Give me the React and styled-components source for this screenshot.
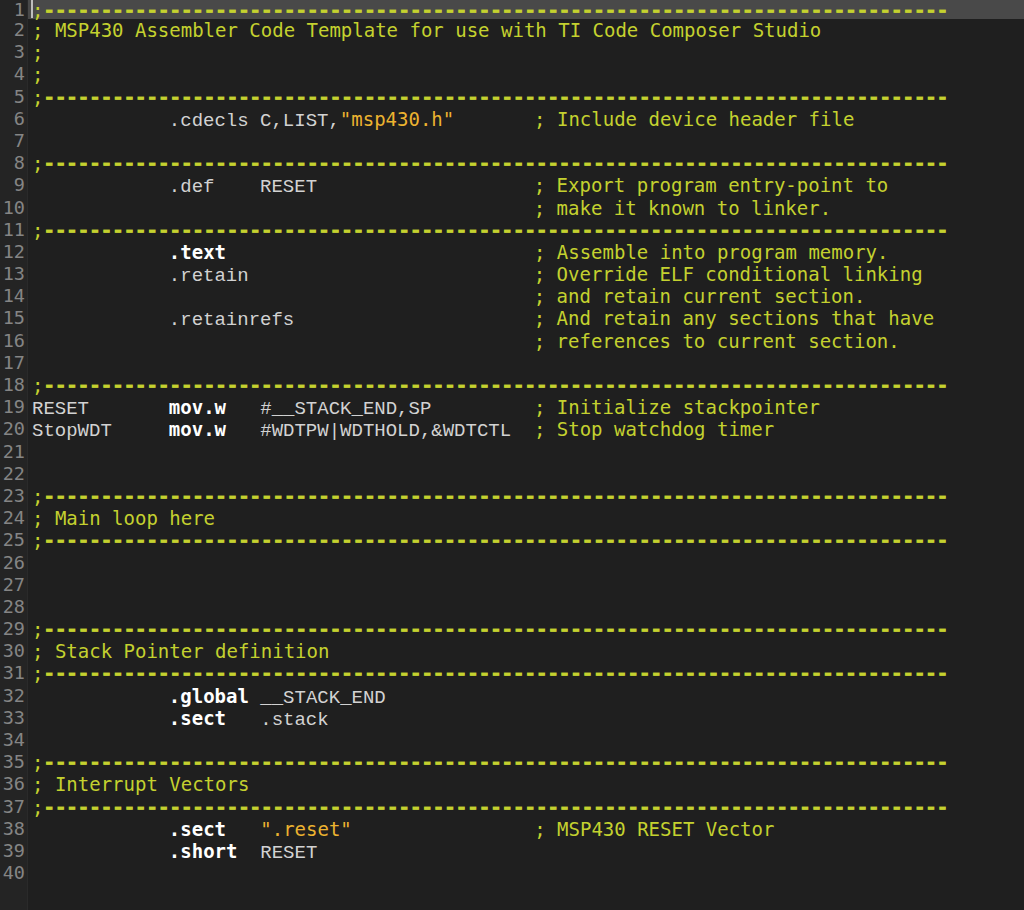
import React from "react";
import styled, { createGlobalStyle, css } from "styled-components";

const Global = createGlobalStyle`
  html, body { margin: 0; padding: 0; background: #1f1f1f; }
  body { font-family: "DejaVu Sans Mono", monospace; }
`;

const LINE_H = 22.2;
const COMMENT = "#c4d12f";

const Editor = styled.div`
  display: flex;
  height: 910px;
  overflow: hidden;
  background: #1f1f1f;
`;

const Gutter = styled.div`
  width: 27px;
  flex: 0 0 27px;
  background: #242424;
  border-right: 1px solid #2a2a2a;
  display: flex;
  flex-direction: column;
`;

const rowBox = css`
  height: ${LINE_H}px;
  line-height: ${LINE_H}px;
  &:first-child {
    height: 19px;
    line-height: 20px;
  }
`;

const LineNo = styled.div`
  ${rowBox}
  text-align: right;
  padding-right: 2px;
  font-family: "DejaVu Sans Mono", monospace;
  font-size: 18.5px;
  color: #858585;
`;

const Code = styled.div`
  flex: 1;
  display: flex;
  flex-direction: column;
`;

const Line = styled.div`
  ${rowBox}
  position: relative;
  padding-left: 4px;
  white-space: pre;
  font-size: 19px;
  ${(p) =>
    p.$active &&
    css`
      background: #494949;
    `}
`;

const Cursor = styled.span`
  position: absolute;
  left: 3px;
  top: 0;
  width: 2px;
  height: 18px;
  background: #bdbdbd;
`;

const Seg = styled.span`
  font-family: ${(p) =>
    p.$kind === "t" || p.$kind === "sp"
      ? '"Liberation Mono", monospace'
      : '"DejaVu Sans Mono", monospace'};
  font-weight: ${(p) => (p.$kind === "b" ? 700 : 400)};
  color: ${(p) =>
    ({
      c: COMMENT,
      s: "#ecb330",
      t: "#d2d2d2",
      b: "#ffffff",
      sp: "#d2d2d2",
    })[p.$kind]};
`;

const DashChar = styled.span`
  -webkit-text-stroke: 1.7px ${COMMENT};
`;

const DASH = "DASH";
const d = [[0, "c", DASH]];
const c = (t) => [[0, "c", t]];

const LINES = [
  d,
  c("; MSP430 Assembler Code Template for use with TI Code Composer Studio"),
  c(";"),
  c(";"),
  d,
  [
    [12, "t", ".cdecls C,LIST,"],
    [27, "s", '"msp430.h"'],
    [44, "c", "; Include device header file"],
  ],
  [],
  d,
  [
    [12, "t", ".def"],
    [20, "t", "RESET"],
    [44, "c", "; Export program entry-point to"],
  ],
  [[44, "c", "; make it known to linker."]],
  d,
  [
    [12, "b", ".text"],
    [44, "c", "; Assemble into program memory."],
  ],
  [
    [12, "t", ".retain"],
    [44, "c", "; Override ELF conditional linking"],
  ],
  [[44, "c", "; and retain current section."]],
  [
    [12, "t", ".retainrefs"],
    [44, "c", "; And retain any sections that have"],
  ],
  [[44, "c", "; references to current section."]],
  [],
  d,
  [
    [0, "t", "RESET"],
    [12, "b", "mov.w"],
    [20, "t", "#__STACK_END,SP"],
    [44, "c", "; Initialize stackpointer"],
  ],
  [
    [0, "t", "StopWDT"],
    [12, "b", "mov.w"],
    [20, "t", "#WDTPW|WDTHOLD,&WDTCTL"],
    [44, "c", "; Stop watchdog timer"],
  ],
  [],
  [],
  d,
  c("; Main loop here"),
  d,
  [],
  [],
  [],
  d,
  c("; Stack Pointer definition"),
  d,
  [
    [12, "b", ".global"],
    [20, "t", "__STACK_END"],
  ],
  [
    [12, "b", ".sect"],
    [20, "t", ".stack"],
  ],
  [],
  d,
  c("; Interrupt Vectors"),
  d,
  [
    [12, "b", ".sect"],
    [20, "s", '".reset"'],
    [44, "c", "; MSP430 RESET Vector"],
  ],
  [
    [12, "b", ".short"],
    [20, "t", "RESET"],
  ],
  [],
];

function Rule() {
  return (
    <Seg $kind="c">
      ;
      {Array.from({ length: 79 }, (_, i) => (
        <DashChar key={i}>-</DashChar>
      ))}
    </Seg>
  );
}

function renderLine(segs) {
  if (segs[0] && segs[0][2] === DASH) return <Rule />;
  const out = [];
  let col = 0;
  segs.forEach(([at, kind, text], i) => {
    if (at > col) {
      out.push(
        <Seg key={"p" + i} $kind="sp">
          {" ".repeat(at - col)}
        </Seg>
      );
      col = at;
    }
    out.push(
      <Seg key={"s" + i} $kind={kind}>
        {text}
      </Seg>
    );
    col += text.length;
  });
  return out;
}

export default function App() {
  return (
    <>
      <Global />
      <Editor>
        <Gutter>
          {LINES.map((_, i) => (
            <LineNo key={i}>{i + 1}</LineNo>
          ))}
        </Gutter>
        <Code>
          {LINES.map((segs, i) => (
            <Line key={i} $active={i === 0}>
              {i === 0 && <Cursor />}
              {segs.length ? renderLine(segs) : " "}
            </Line>
          ))}
        </Code>
      </Editor>
    </>
  );
}
